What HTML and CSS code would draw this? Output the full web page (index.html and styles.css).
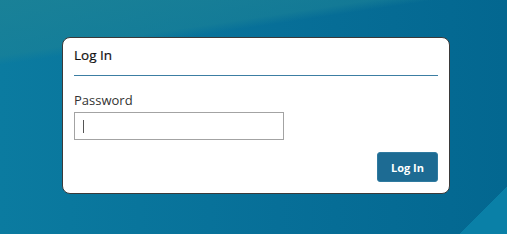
FILE: index.html
```html
<!DOCTYPE html>
<html lang="en">
    <head>
        <meta charset="utf-8">
        <title>Log In</title>
        <link rel="stylesheet" href="styles.css">
    </head>
    <body>
    <div class="page">
        <form class="card">
            <div class="cardHead">
                <h2>Log In</h2>
            </div>
            <label class="label" for="pwd">Password</label>
            <div class="field">
                <input class="import" id="pwd" type="password">
                <span class="caret"></span>
            </div>
            <div class="actions">
                <input class="btn" type="button" value="Log In">
            </div>
        </form>
    </div>
    </body>
</html>
```

FILE: styles.css
```css
html,body{margin:0;padding:0;}
body{
    width:507px;
    height:234px;
    overflow:hidden;
    font-family:"Open Sans","Liberation Sans",sans-serif;
    background-color:#086d96;
    background-image:
        linear-gradient(135deg, rgba(12,132,170,0) 93.6%, #0a80a7 93.6%),
        linear-gradient(171.5deg, rgba(28,130,150,0.85) 0%, rgba(28,130,150,0.6) 18%, rgba(28,130,150,0) 21%),
        linear-gradient(90deg, #0b7ba0 0%, #076f98 55%, #036790 100%);
}
.page{
    padding:37px 0 0 62px;
}
.card{
    box-sizing:border-box;
    width:388px;
    height:157px;
    margin:0;
    padding:8px 11px 11px 11px;
    background-color:#fff;
    border:1px solid #3a3a3a;
    border-radius:8px;
    display:flex;
    flex-direction:column;
}
.cardHead{
    padding-bottom:10px;
    border-bottom:1px solid #3c7ea3;
}
.cardHead h2{
    margin:0;
    font-size:13.5px;
    line-height:19px;
    font-weight:500;
    color:#111;
    -webkit-text-stroke:0.2px #111;
}
.label{
    margin-top:15px;
    font-size:13px;
    line-height:18px;
    color:#333;
}
.field{
    position:relative;
    margin-top:3px;
    width:210px;
    height:28px;
}
.import{
    box-sizing:border-box;
    width:210px;
    height:28px;
    margin:0;
    border:1px solid #a3a3a3;
    background:#fff;
    outline:none;
}
.caret{
    position:absolute;
    left:9px;
    top:8px;
    width:1px;
    height:13px;
    background-color:#555;
}
.actions{
    display:flex;
    justify-content:flex-end;
    margin-top:12px;
}
.btn{
    width:61px;
    height:30px;
    margin:0;
    padding:0;
    border:1px solid #2f7aa0;
    border-radius:3px;
    background-color:#1d6b93;
    color:#fff;
    font-family:"Open Sans","Liberation Sans",sans-serif;
    font-size:11px;
    font-weight:700;
}
```
